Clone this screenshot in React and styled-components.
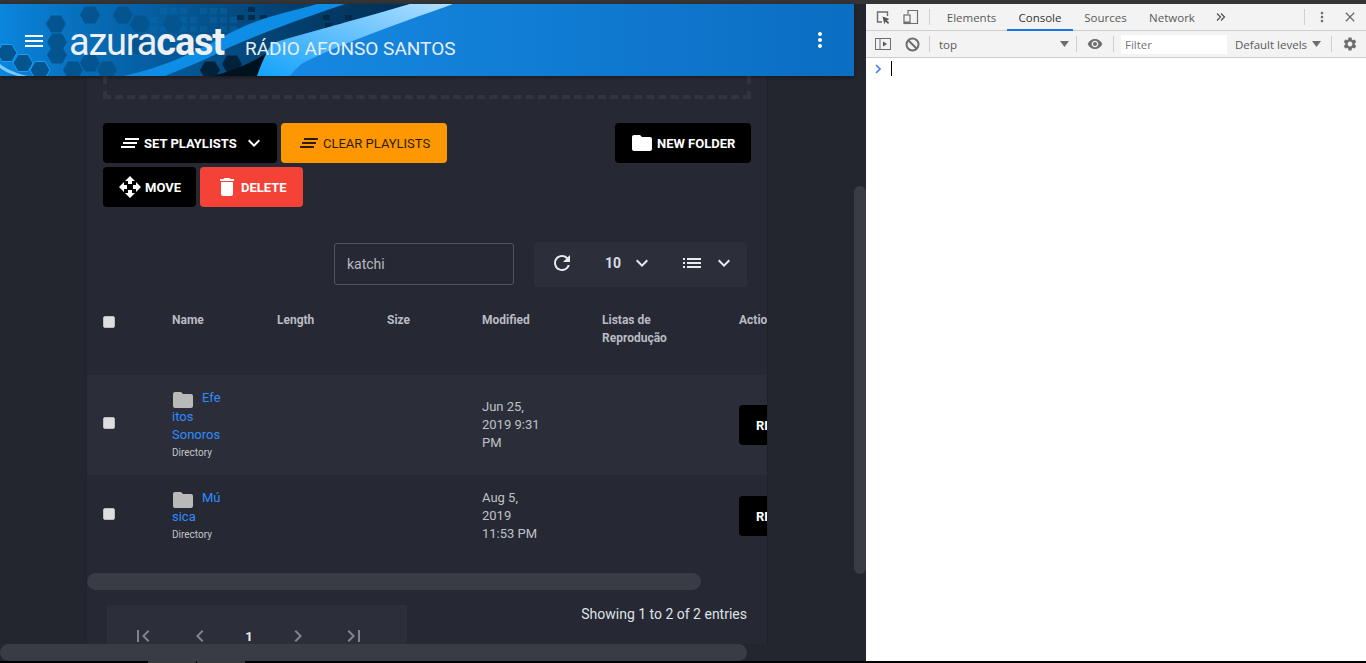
import React from 'react'
import styled, { createGlobalStyle } from 'styled-components'
import {
  MdMenu, MdMoreVert, MdClearAll, MdKeyboardArrowDown, MdOpenWith, MdDelete, MdFolder,
  MdRefresh, MdList, MdFirstPage, MdLastPage, MdChevronLeft, MdChevronRight,
  MdRemoveRedEye, MdSettings, MdClose,
} from 'react-icons/md'

const GlobalStyle = createGlobalStyle`
  html, body {
    margin: 0;
    height: 100%;
    overflow: hidden;
    background: #000;
  }
  * {
    box-sizing: border-box;
  }
`

const Screen = styled.div`
  width: 1366px;
  height: 663px;
  display: flex;
  flex-direction: column;
  overflow: hidden;
  font-family: Roboto, "Liberation Sans", sans-serif;
  background: #000;
`

const TopStrip = styled.div`
  height: 4px;
  flex: none;
  background: #333537;
`

const Main = styled.div`
  height: 657px;
  flex: none;
  display: flex;
`

const Page = styled.div`
  position: relative;
  width: 866px;
  flex: none;
  display: flex;
  background: #23252f;
`

const Viewport = styled.div`
  width: 854px;
  flex: none;
  display: flex;
  flex-direction: column;
`

const Header = styled.header`
  position: relative;
  height: 72px;
  flex: none;
  display: flex;
  align-items: center;
  padding: 0 22px;
  color: #fff;
  overflow: hidden;
  box-shadow: 0 1px 4px rgba(0, 0, 0, 0.4);
  z-index: 2;

  > * {
    position: relative;
  }
`

const HeaderArt = styled.svg`
  && {
    position: absolute;
  }
  left: 0;
  top: 0;
  width: 854px;
  height: 72px;
`

const MenuButton = styled.div`
  display: flex;
  margin-top: 2px;
`

const Logo = styled.div`
  width: 157px;
  margin: 3px 0 0 23px;
  font-size: 38px;
  line-height: 40px;
  font-weight: 400;
  letter-spacing: -1.2px;
  color: #eef0f2;
  white-space: nowrap;

  b {
    font-weight: 700;
  }
`

const Title = styled.h1`
  margin: 16px 0 0 19px;
  font-size: 19px;
  font-weight: 400;
  color: #e8eef4;
  white-space: nowrap;
`

const MoreButton = styled.div`
  margin-left: auto;
  display: flex;
`

const Body = styled.div`
  flex: 1;
  min-height: 0;
  display: flex;
  padding: 0 87px;
  overflow: hidden;
`

const Card = styled.main`
  width: 680px;
  height: 568px;
  flex: none;
  background: #262833;
  box-shadow: 1px 0 0 #20222b, -1px 0 0 #22242d;
  overflow: hidden;
`

const Dropzone = styled.div`
  height: 23px;
  margin: 0 16px;
  border: 4px dashed #32353e;
  border-top: 0;
`

const Actions = styled.div`
  display: flex;
  justify-content: space-between;
  align-items: flex-start;
  padding: 24px 16px 0;
`

const ActionGroup = styled.div`
  width: 360px;
  display: flex;
  flex-wrap: wrap;
  gap: 4px;
`

const colors = {
  dark: ['#000', '#fff'],
  orange: ['#ff9800', '#2e1c00'],
  red: ['#f44336', '#fff'],
}

const Button = styled.button`
  height: 40px;
  display: inline-flex;
  align-items: center;
  gap: ${(p) => p.$gap || 3}px;
  width: ${(p) => p.$width}px;
  padding: 1px 0 0 ${(p) => p.$pad}px;
  border: 0;
  border-radius: 4px;
  font-family: inherit;
  font-size: 13px;
  font-weight: ${(p) => (p.$tone === 'orange' ? 400 : 700)};
  text-transform: uppercase;
  background: ${(p) => colors[p.$tone][0]};
  color: ${(p) => colors[p.$tone][1]};

  svg {
    margin-top: -1px;
  }
`

const ButtonCaret = styled(MdKeyboardArrowDown)`
  margin-left: 3px;
`

const Filters = styled.div`
  display: flex;
  justify-content: flex-end;
  align-items: center;
  gap: 20px;
  padding: 35px 20px 0 0;
`

const Search = styled.input`
  width: 180px;
  height: 42px;
  margin-top: -1px;
  padding: 0 12px;
  background: transparent;
  border: 1px solid #50525e;
  border-radius: 3px;
  color: #b6b9c0;
  font-family: inherit;
  font-size: 14px;
  outline: none;
`

const ToolBox = styled.div`
  width: 213px;
  height: 45px;
  display: flex;
  align-items: center;
  padding: 0 0 3px 16px;
  background: #2c2f39;
  border-radius: 4px;
  color: #e8eaee;
`

const ToolCount = styled.span`
  width: 22px;
  margin-left: 31px;
  font-size: 14px;
  font-weight: 700;
  color: #d8dee6;
`

const ToolSpacer = styled.span`
  width: ${(p) => p.$w}px;
  flex: none;
`

const ToolCaret = styled(MdKeyboardArrowDown)`
  margin-left: ${(p) => p.$ml || 0}px;
`

const Row = styled.div`
  display: grid;
  grid-template-columns: 69px 105px 110px 95px 120px 137px 100px;
  padding-left: 16px;
  align-items: center;
  width: 760px;
  background: ${(p) => (p.$odd ? '#2b2e38' : 'transparent')};
  height: ${(p) => p.$h}px;
`

const HeadRow = styled(Row)`
  align-items: start;
  margin-top: 12px;
  padding-top: 12px;
`

const HeadCell = styled.div`
  font-size: 12px;
  line-height: 18px;
  font-weight: 700;
  color: #b9bbc2;
`

const Check = styled.input.attrs({ type: 'checkbox' })`
  appearance: none;
  width: 12px;
  height: 12px;
  margin: ${(p) => (p.$head ? '5px 0 0' : '-5px 0 0')};
  background: #dedede;
  border: 1px solid #bdbdbd;
  border-radius: 2px;
`

const NameCell = styled.div`
  width: 56px;
`

const FileLink = styled.a`
  font-size: 13px;
  line-height: 18px;
  color: #2f8cff;
  display: block;

  svg {
    vertical-align: -6px;
    margin: -4px 7px -4px -1px;
    color: #b9b9b9;
  }
`

const FileType = styled.small`
  display: block;
  font-size: 10px;
  line-height: 18px;
  color: #c4c5c9;
`

const DateCell = styled.div`
  font-size: 13px;
  line-height: 18px;
  color: #bfc1c6;
`

const RenameButton = styled(Button)`
  width: 90px;
`

const InnerScroll = styled.div`
  width: 614px;
  height: 17px;
  margin-top: 16px;
  border-radius: 9px;
  background: #393c45;
`

const Footer = styled.div`
  display: flex;
  justify-content: space-between;
  align-items: flex-start;
  padding: 15px 20px 0;
`

const Pager = styled.nav`
  width: 300px;
  height: 70px;
  display: flex;
  padding: 22px 0 0 7px;
  background: #2c2f39;
  color: #7f858f;
`

const PagerItem = styled.span`
  width: ${(p) => p.$w}px;
  height: 18px;
  display: flex;
  align-items: center;
  justify-content: center;
  font-size: 13px;
  font-weight: 700;
  color: ${(p) => (p.$on ? '#e8eef0' : 'inherit')};
`

const Entries = styled.div`
  font-size: 14px;
  line-height: 18px;
  color: #dfe2e6;
`

const PageScrollTrack = styled.div`
  width: 12px;
  flex: none;
  padding-top: 182px;
`

const PageScrollThumb = styled.div`
  height: 388px;
  border-radius: 6px;
  background: #393c45;
`

const BottomScroll = styled.div`
  position: absolute;
  left: 0;
  bottom: 0;
  width: 747px;
  height: 17px;
  border-radius: 9px;
  background: #393c45;
  z-index: 3;
`

const BottomTabs = styled.div`
  position: absolute;
  left: 148px;
  bottom: -2px;
  display: flex;
  gap: 1px;
`

const BottomTab = styled.span`
  width: 48px;
  height: 2px;
  background: #3a3a3a;
`

const Devtools = styled.aside`
  width: 500px;
  flex: none;
  display: flex;
  flex-direction: column;
  background: #fff;
  font-family: "Open Sans", "Noto Sans", sans-serif;
  font-size: 11.5px;
  color: #5a5a5a;
`

const TabBar = styled.div`
  height: 27px;
  flex: none;
  display: flex;
  align-items: stretch;
  padding-left: 9px;
  background: #f3f3f3;
  border-bottom: 1px solid #cdcdcd;
`

const Tool = styled.span`
  display: flex;
  align-items: center;
  justify-content: center;
  width: ${(p) => p.$w || 16}px;
  margin-left: ${(p) => p.$ml || 0}px;
  flex: none;
  color: #6e6e6e;
`

const Sep = styled.span`
  width: 1px;
  height: 16px;
  align-self: center;
  margin-left: ${(p) => p.$ml}px;
  flex: none;
  background: #cfcfcf;
`

const Tab = styled.span`
  display: flex;
  align-items: center;
  width: ${(p) => p.$w}px;
  margin-left: ${(p) => p.$ml || 0}px;
  padding-top: 1px;
  justify-content: center;
  flex: none;
  color: ${(p) => (p.$on ? '#333' : '#5a5a5a')};
  border-bottom: 2px solid ${(p) => (p.$on ? '#1a73e8' : 'transparent')};
  margin-bottom: -1px;
`

const SubBar = styled(TabBar)`
  height: 27px;
`

const ContextName = styled.span`
  width: 130px;
  margin-left: 9px;
  display: flex;
  align-items: center;
  justify-content: space-between;
  flex: none;
`

const Filter = styled.input`
  width: 106px;
  height: 19px;
  align-self: center;
  margin-left: 7px;
  padding: 0 4px;
  border: 0;
  background: #fff;
  font-family: inherit;
  font-size: 11.5px;
  color: #5a5a5a;
  &::placeholder {
    color: #757575;
  }
`

const Levels = styled.span`
  width: 88px;
  margin-left: 8px;
  display: flex;
  align-items: center;
  flex: none;
  white-space: nowrap;
`

const LevelsCaret = styled.svg`
  margin-left: 5px;
  flex: none;
`

const ConsoleArea = styled.div`
  flex: 1;
  display: flex;
  align-items: flex-start;
  gap: 10px;
  padding: 3px 0 0 9px;
`

const Caret = styled.span`
  width: 1px;
  height: 15px;
  background: #000;
`

const Prompt = styled.svg`
  margin-top: 3px;
`

const IconInspect = () => (
  <svg width="16" height="16" viewBox="0 0 16 16">
    <path d="M7 13H2.5V3h10v4" fill="none" stroke="#6e6e6e" strokeWidth="1.4" />
    <path d="M7.5 7.5l7 2.6-2.7 1.2 2.4 2.4-1.2 1.2-2.4-2.4-1.2 2.7z" fill="#555" />
  </svg>
)

const IconDevice = () => (
  <svg width="16" height="16" viewBox="0 0 16 16">
    <path d="M5 5V1.5h9.5v13H6" fill="none" stroke="#6e6e6e" strokeWidth="1.2" />
    <rect x="1" y="6" width="6" height="8.5" fill="none" stroke="#6e6e6e" strokeWidth="1.2" />
    <rect x="1" y="12.5" width="6" height="2" fill="#6e6e6e" />
  </svg>
)

const IconDrawer = () => (
  <svg width="16" height="14" viewBox="0 0 16 14">
    <rect x="0.5" y="1.5" width="15" height="11" fill="none" stroke="#6e6e6e" />
    <rect x="4.5" y="1.5" width="1" height="11" fill="#6e6e6e" />
    <path d="M8 4.5l4 2.5-4 2.5z" fill="#555" />
  </svg>
)

const IconClear = () => (
  <svg width="15" height="15" viewBox="0 0 15 15">
    <circle cx="7.5" cy="7.5" r="6" fill="none" stroke="#6e6e6e" strokeWidth="2" />
    <path d="M3.5 3.5l8 8" stroke="#6e6e6e" strokeWidth="2" />
  </svg>
)

const IconChevrons = () => (
  <svg width="10" height="10" viewBox="0 0 10 10">
    <path d="M1 1.5L4.5 5 1 8.5M5 1.5L8.5 5 5 8.5" fill="none" stroke="#555" strokeWidth="1.3" />
  </svg>
)

const hexes = [
  [90, 11], [123, 11], [56, 20], [140, 20], [173, 20], [57, 38], [7, 49], [23, 59],
  [40, 66], [73, 66], [90, 59], [107, 66], [57, 51], [140, 42], [210, 66], [232, 60],
]
const darkSquares = [
  [237, 11], [248, 11], [260, 11], [248, 3], [323, 11], [345, 11], [325, 19], [337, 19],
]

function gridSquares () {
  const out = []
  for (let r = 0; r < 4; r++) {
    for (let c = 0; c < 9; c++) {
      if ((r * 3 + c * 5) % 4 !== 0) out.push([150 + c * 10, 4 + r * 9])
    }
  }
  return out
}

function Art () {
  return (
    <HeaderArt viewBox="0 0 854 72" preserveAspectRatio="none">
      <defs>
        <linearGradient id="base" x1="0" x2="1" y1="0" y2="0">
          <stop offset="0.3" stopColor="#1789e3" />
          <stop offset="1" stopColor="#0a6ec2" />
        </linearGradient>
        <linearGradient id="deep" x1="0" x2="1" y1="0" y2="0">
          <stop offset="0" stopColor="#0b85de" />
          <stop offset="0.25" stopColor="#0669b2" />
          <stop offset="0.7" stopColor="#03406f" />
          <stop offset="1" stopColor="#032f54" />
        </linearGradient>
        <linearGradient id="swoosh" x1="0" x2="1" y1="1" y2="0">
          <stop offset="0" stopColor="#12a2fb" />
          <stop offset="0.5" stopColor="#62c0fc" />
          <stop offset="1" stopColor="#b2e0ff" />
        </linearGradient>
      </defs>
      <rect width="854" height="72" fill="url(#base)" />
      <path d="M0 0H410C370 12 320 25 273 39C268 44 262 58 257 72H0Z" fill="url(#deep)" />
      {gridSquares().map(([x, y], i) => (
        <rect key={i} x={x} y={y} width="7" height="6" fill="#0a6cb0" opacity="0.35" />
      ))}
      {hexes.map(([x, y], i) => (
        <polygon
          key={i}
          points={`${x - 10},${y} ${x - 5},${y - 8.5} ${x + 5},${y - 8.5} ${x + 10},${y} ${x + 5},${y + 8.5} ${x - 5},${y + 8.5}`}
          fill={i > 13 ? '#02223c' : '#04558f'}
          stroke={i > 5 && i < 9 ? '#189ef5' : 'none'}
        />
      ))}
      {darkSquares.map(([x, y], i) => (
        <rect key={i} x={x} y={y} width="7" height="5" fill="#022644" opacity="0.8" />
      ))}
      <path d="M123 72C170 62 200 45 230 29S290 8 317 0H345C300 15 260 30 230 43C210 54 180 66 165 72Z" fill="#0d8de6" />
      <path d="M213 72C228 68 250 60 267 49L258 72Z" fill="#01121f" />
      <path d="M257 72C262 58 268 44 273 39C320 25 370 12 410 0H453C420 12 390 22 363 33C340 42 320 50 303 59C298 62 295 66 290 72Z" fill="url(#swoosh)" />
      <path d="M0 60C8 66 18 70 28 72H18C10 70 4 67 0 64Z" fill="#7cc9fb" />
    </HeaderArt>
  )
}

export default function App () {
  return (
    <Screen>
      <GlobalStyle />
      <TopStrip />
      <Main>
        <Page>
          <Viewport>
            <Header>
              <Art />
              <MenuButton><MdMenu size={24} /></MenuButton>
              <Logo>azura<b>cast</b></Logo>
              <Title>RÁDIO AFONSO SANTOS</Title>
              <MoreButton><MdMoreVert size={24} /></MoreButton>
            </Header>
            <Body>
              <Card>
                <Dropzone />
                <Actions>
                  <ActionGroup>
                    <Button $tone="dark" $width={174} $pad={15} $gap={2}>
                      <MdClearAll size={24} /> Set Playlists
                      <ButtonCaret size={24} />
                    </Button>
                    <Button $tone="orange" $width={166} $pad={16} $gap={2}>
                      <MdClearAll size={24} /> Clear Playlists
                    </Button>
                    <Button $tone="dark" $width={93} $pad={15}>
                      <MdOpenWith size={24} /> Move
                    </Button>
                    <Button $tone="red" $width={103} $pad={15} $gap={2}>
                      <MdDelete size={24} /> Delete
                    </Button>
                  </ActionGroup>
                  <Button $tone="dark" $width={136} $pad={15}>
                    <MdFolder size={24} /> New Folder
                  </Button>
                </Actions>

                <Filters>
                  <Search defaultValue="katchi" />
                  <ToolBox>
                    <MdRefresh size={24} />
                    <ToolCount>10</ToolCount>
                    <ToolCaret size={24} $ml={3} />
                    <ToolSpacer $w={26} />
                    <MdList size={24} />
                    <ToolSpacer $w={8} />
                    <ToolCaret size={24} />
                  </ToolBox>
                </Filters>

                <HeadRow $h={76}>
                  <Check $head />
                  <HeadCell>Name</HeadCell>
                  <HeadCell>Length</HeadCell>
                  <HeadCell>Size</HeadCell>
                  <HeadCell>Modified</HeadCell>
                  <HeadCell>Listas de<br />Reprodução</HeadCell>
                  <HeadCell>Actions</HeadCell>
                </HeadRow>

                <Row $odd $h={100}>
                  <Check />
                  <NameCell>
                    <FileLink><MdFolder size={24} />Efe<br />itos<br />Sonoros</FileLink>
                    <FileType>Directory</FileType>
                  </NameCell>
                  <span />
                  <span />
                  <DateCell>Jun 25,<br />2019 9:31<br />PM</DateCell>
                  <span />
                  <RenameButton as="div" $tone="dark" $pad={17}>RENAME</RenameButton>
                </Row>

                <Row $h={82}>
                  <Check />
                  <NameCell>
                    <FileLink><MdFolder size={24} />Mú<br />sica</FileLink>
                    <FileType>Directory</FileType>
                  </NameCell>
                  <span />
                  <span />
                  <DateCell>Aug 5,<br />2019<br />11:53 PM</DateCell>
                  <span />
                  <RenameButton as="div" $tone="dark" $pad={17}>RENAME</RenameButton>
                </Row>

                <InnerScroll />

                <Footer>
                  <Pager>
                    <PagerItem $w={58}><MdFirstPage size={24} /></PagerItem>
                    <PagerItem $w={56}><MdChevronLeft size={24} /></PagerItem>
                    <PagerItem $w={42} $on>1</PagerItem>
                    <PagerItem $w={56}><MdChevronRight size={24} /></PagerItem>
                    <PagerItem $w={56}><MdLastPage size={24} /></PagerItem>
                  </Pager>
                  <Entries>Showing 1 to 2 of 2 entries</Entries>
                </Footer>
              </Card>
            </Body>
          </Viewport>
          <PageScrollTrack><PageScrollThumb /></PageScrollTrack>
          <BottomScroll>
            <BottomTabs>
              <BottomTab />
              <BottomTab />
            </BottomTabs>
          </BottomScroll>
        </Page>

        <Devtools>
          <TabBar>
            <Tool><IconInspect /></Tool>
            <Tool $ml={12}><IconDevice /></Tool>
            <Sep $ml={10} />
            <Tab $w={71} $ml={6}>Elements</Tab>
            <Tab $w={66} $on>Console</Tab>
            <Tab $w={65}>Sources</Tab>
            <Tab $w={68}>Network</Tab>
            <Tool $w={12} $ml={9}><IconChevrons /></Tool>
            <Sep $ml={77} />
            <Tool $ml={9}><MdMoreVert size={18} /></Tool>
            <Tool $ml={12}><MdClose size={18} /></Tool>
          </TabBar>
          <SubBar>
            <Tool><IconDrawer /></Tool>
            <Tool $ml={13}><IconClear /></Tool>
            <Sep $ml={9} />
            <ContextName>
              top
              <svg width="9" height="6" viewBox="0 0 9 6"><path d="M0 0h9L4.5 6z" fill="#6e6e6e" /></svg>
            </ContextName>
            <Sep $ml={7} />
            <Tool $ml={10}><MdRemoveRedEye size={18} /></Tool>
            <Sep $ml={10} />
            <Filter placeholder="Filter" />
            <Levels>
              Default levels
              <LevelsCaret width="9" height="6" viewBox="0 0 9 6"><path d="M0 0h9L4.5 6z" fill="#6e6e6e" /></LevelsCaret>
            </Levels>
            <Sep $ml={8} />
            <Tool $ml={10}><MdSettings size={18} /></Tool>
          </SubBar>
          <ConsoleArea>
            <Prompt width="6" height="10" viewBox="0 0 6 10">
              <path d="M1 1l4 4-4 4" fill="none" stroke="#3b82f6" strokeWidth="1.6" />
            </Prompt>
            <Caret />
          </ConsoleArea>
        </Devtools>
      </Main>
    </Screen>
  )
}
